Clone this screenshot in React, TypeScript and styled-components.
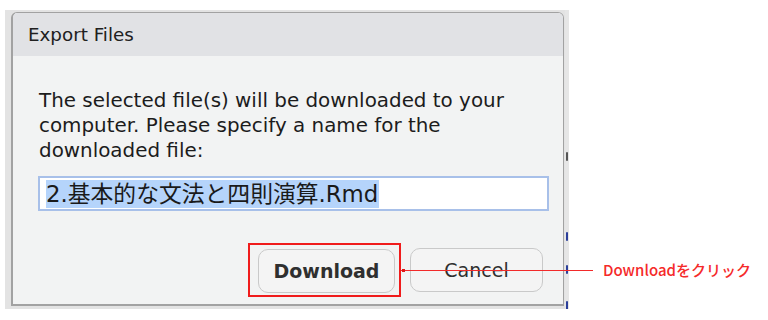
import styled, { createGlobalStyle } from 'styled-components';

const GlobalStyle = createGlobalStyle`
  html, body {
    margin: 0;
    padding: 0;
    background: #ffffff;
  }
`;

const Canvas = styled.div`
  position: relative;
  width: 768px;
  height: 320px;
  overflow: hidden;
`;

const Screen = styled.div`
  position: relative;
  margin: 10px 0 0 5px;
  width: 564px;
  height: 299px;
  background: #e3e3e3;
  padding: 2px 0 0 6px;
  box-sizing: border-box;
  overflow: hidden;
`;

const Dialog = styled.div`
  width: 553px;
  height: 294px;
  box-sizing: border-box;
  border: 1px solid #a2a2a2;
  border-left-width: 2px;
  border-bottom-width: 2px;
  border-radius: 6px 6px 0 0;
  background: #f2f3f3;
  display: flex;
  flex-direction: column;
  overflow: hidden;
  font-family: 'DejaVu Sans', 'Noto Sans CJK JP', sans-serif;
  color: #1f1f1f;
`;

const Header = styled.div`
  height: 43px;
  flex-shrink: 0;
  background: #e1e2e5;
  display: flex;
  align-items: center;
  padding-left: 15px;
  font-size: 18.3px;
  color: #202020;
`;

const Body = styled.div`
  padding: 32px 20px 0 25px;
  display: flex;
  flex-direction: column;
`;

const Message = styled.p`
  margin: 0 0 0 1px;
  font-size: 19.9px;
  line-height: 25px;
  color: #1c1c1c;
`;

const NameField = styled.div`
  margin-top: 13px;
  width: 511px;
  height: 35px;
  box-sizing: border-box;
  border: 2px solid #a8c0e9;
  background: #ffffff;
  display: flex;
  align-items: center;
  padding-left: 6px;
  font-family: 'DejaVu Sans', 'Noto Sans CJK JP', sans-serif;
  font-size: 22.8px;
  color: #1a1a1a;
`;

const Selection = styled.span`
  background: #b5d4fb;
  line-height: 28px;
  padding-right: 1px;
`;

const ButtonRow = styled.div`
  margin-top: 32px;
  display: flex;
  justify-content: flex-end;
  align-items: center;
  gap: 9px;
`;

const Highlight = styled.div`
  border: 2px solid #f01b1b;
  padding: 4px 4px 2px 8px;
  display: flex;
`;

const Button = styled.button<{ $primary?: boolean; $w: number }>`
  width: ${p => p.$w}px;
  height: 44px;
  border: 1.5px solid #c9c9c9;
  border-radius: 10px;
  background: #f4f4f4;
  font-family: 'DejaVu Sans', sans-serif;
  font-size: 19px;
  font-weight: ${p => (p.$primary ? 700 : 400)};
  color: #2f2f2f;
  padding: 0;
`;

const EdgeStrip = styled.div`
  position: absolute;
  right: 0;
  top: 0;
  width: 4px;
  height: 100%;
  background: #e6e6e6;
`;

const EdgeMark = styled.span<{ $top: number; $color: string }>`
  position: absolute;
  left: 1px;
  top: ${p => p.$top}px;
  width: 2px;
  height: 9px;
  border-radius: 1px;
  background: ${p => p.$color};
`;

const Callout = styled.div`
  position: absolute;
  left: 401px;
  top: 260px;
  display: flex;
  align-items: center;
  gap: 10px;
`;

const Leader = styled.div`
  position: relative;
  width: 192px;
  height: 1px;
  background: #f22a2a;
  &::before {
    content: '';
    position: absolute;
    left: 1px;
    top: -1px;
    width: 3px;
    height: 3px;
    background: #e01818;
  }
`;

const CalloutText = styled.span`
  font-family: 'Noto Sans CJK JP', sans-serif;
  font-size: 15px;
  font-weight: 500;
  color: #f52a2a;
  line-height: 20px;
`;

export default function App() {
  return (
    <>
      <GlobalStyle />
      <Canvas>
        <Screen>
          <Dialog>
            <Header>Export Files</Header>
            <Body>
              <Message>
                The selected file(s) will be downloaded to your
                <br />
                computer. Please specify a name for the
                <br />
                downloaded file:
              </Message>
              <NameField>
                <Selection>2.基本的な文法と四則演算.Rmd</Selection>
              </NameField>
              <ButtonRow>
                <Highlight>
                  <Button $primary $w={137}>
                    Download
                  </Button>
                </Highlight>
                <Button $w={133}>Cancel</Button>
              </ButtonRow>
            </Body>
          </Dialog>
          <EdgeStrip>
            <EdgeMark $top={142} $color='#555' />
            <EdgeMark $top={222} $color='#2b3f9a' />
            <EdgeMark $top={255} $color='#2b3f9a' />
            <EdgeMark $top={291} $color='#2b3f9a' />
          </EdgeStrip>
        </Screen>
        <Callout>
          <Leader />
          <CalloutText>Downloadをクリック</CalloutText>
        </Callout>
      </Canvas>
    </>
  );
}
